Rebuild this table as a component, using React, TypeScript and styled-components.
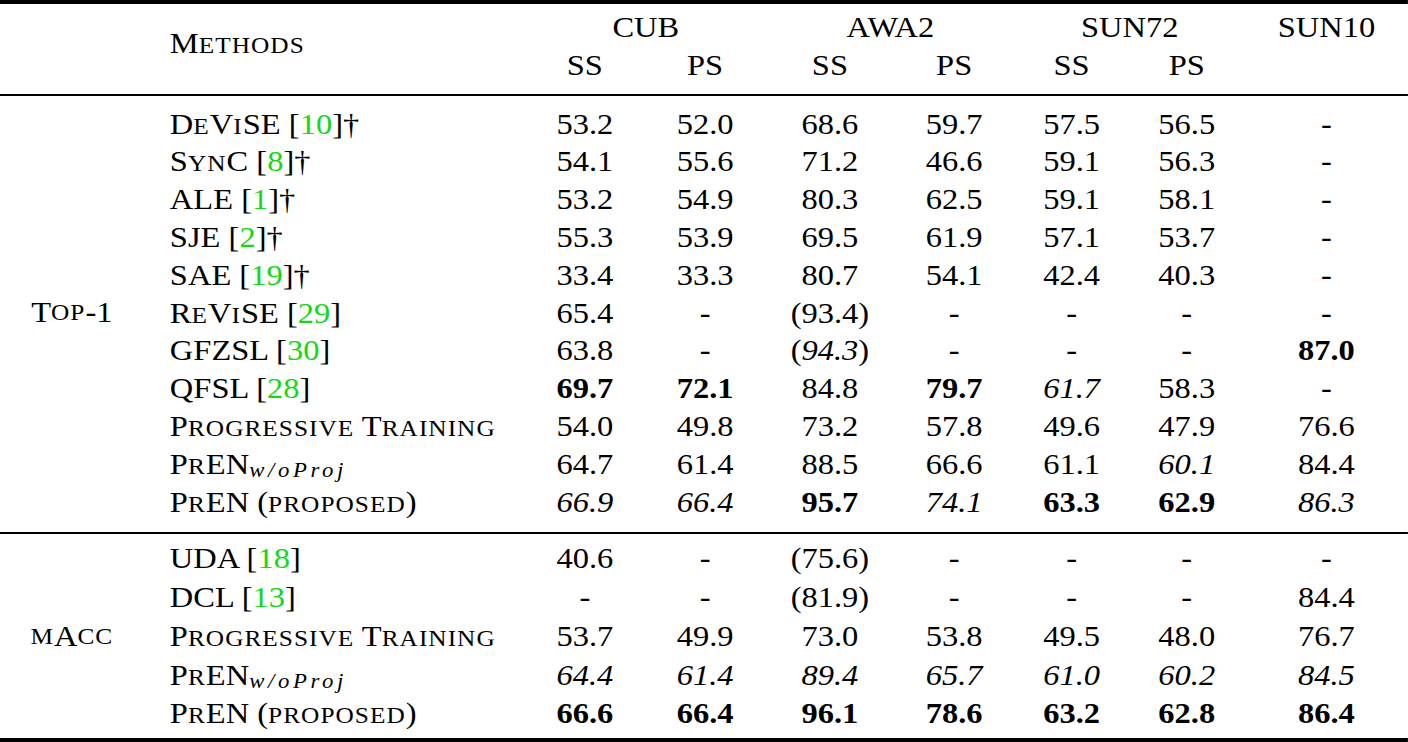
import React from "react";
import styled, { createGlobalStyle } from "styled-components";

const GlobalStyle = createGlobalStyle`
  html, body { margin: 0; padding: 0; background: #fff; }
  body { font-family: "Liberation Serif", "Times New Roman", serif; color: #000; }
`;

const DATA_COLS = "335px 104px 107px 112px 106px 100px 102px 143px";

const Page = styled.div`
  width: 1408px;
  height: 742px;
  overflow: hidden;
  background: #fff;
`;

const Table = styled.div`
  width: 1235px;
  transform: scaleX(1.14);
  transform-origin: 0 0;
  font-family: "Liberation Serif", "Times New Roman", serif;
  font-size: 28.5px;
  color: #000;
`;

const Rule = styled.div<{ $w: number }>`
  height: ${(p) => p.$w}px;
  background: #000;
`;

const Section = styled.div<{ $top: number; $bottom: number }>`
  display: flex;
  padding: ${(p) => p.$top}px 0 ${(p) => p.$bottom}px;
`;

const LabelCol = styled.div`
  width: 126px;
  flex: none;
  display: flex;
  align-items: center;
  justify-content: center;
  white-space: nowrap;
`;

const HeaderGrid = styled.div`
  flex: 1;
  display: grid;
  grid-template-columns: ${DATA_COLS};
  grid-template-rows: 38px 38px;
  line-height: 38px;
  text-align: center;
`;

const HeadMethods = styled.div`
  grid-column: 1;
  grid-row: 1 / 3;
  align-self: center;
  text-align: left;
  padding: 0 0 4px 23px;
`;

const Dataset = styled.div<{ $col: string; $row: number }>`
  grid-column: ${(p) => p.$col};
  grid-row: ${(p) => p.$row};
`;

const Rows = styled.div`
  flex: 1;
  display: flex;
  flex-direction: column;
`;

const Row = styled.div<{ $h: number }>`
  display: grid;
  grid-template-columns: ${DATA_COLS};
  height: ${(p) => p.$h}px;
  line-height: ${(p) => p.$h}px;
`;

const Method = styled.div`
  padding-left: 23px;
  white-space: nowrap;
`;

const Cell = styled.div`
  text-align: center;
  white-space: nowrap;
`;

const Val = styled.span<{ $s: "n" | "b" | "i" }>`
  font-weight: ${(p) => (p.$s === "b" ? 700 : 400)};
  font-style: ${(p) => (p.$s === "i" ? "italic" : "normal")};
`;

const Small = styled.span`
  font-size: 0.78em;
  letter-spacing: 0.04em;
`;

const Cite = styled.span`
  color: #14d814;
`;

const Sub = styled.span`
  font-size: 0.7em;
  font-style: italic;
  letter-spacing: 0.16em;
  vertical-align: -0.14em;
  line-height: 0;
`;

function SC({ t }: { t: string }) {
  const parts = t.match(/[a-z]+|[^a-z]+/g) || [];
  return (
    <>
      {parts.map((p, i) =>
        /^[a-z]/.test(p) ? <Small key={i}>{p.toUpperCase()}</Small> : <React.Fragment key={i}>{p}</React.Fragment>
      )}
    </>
  );
}

function Ref({ n, dagger }: { n: number; dagger?: boolean }) {
  return (
    <>
      {" "}[<Cite>{n}</Cite>]{dagger ? "†" : ""}
    </>
  );
}

function Num({ v }: { v: string }) {
  let s = v;
  let paren = false;
  if (s.startsWith("(")) {
    paren = true;
    s = s.slice(1, -1);
  }
  let st: "n" | "b" | "i" = "n";
  if (s.startsWith("*")) {
    st = "i";
    s = s.slice(1);
  } else if (s.startsWith("!")) {
    st = "b";
    s = s.slice(1);
  }
  const inner = <Val $s={st}>{s}</Val>;
  return <Cell>{paren ? <>({inner})</> : inner}</Cell>;
}

type RowData = { m: React.ReactNode; v: string[] };

const PrenWo = (
  <>
    <SC t="PrEN" />
    <Sub>w/oProj</Sub>
  </>
);
const PrenProp = <SC t="PrEN (proposed)" />;
const Prog = <SC t="Progressive Training" />;

const top1: RowData[] = [
  { m: <><SC t="DeViSE" /><Ref n={10} dagger /></>, v: ["53.2", "52.0", "68.6", "59.7", "57.5", "56.5", "-"] },
  { m: <><SC t="SynC" /><Ref n={8} dagger /></>, v: ["54.1", "55.6", "71.2", "46.6", "59.1", "56.3", "-"] },
  { m: <>ALE<Ref n={1} dagger /></>, v: ["53.2", "54.9", "80.3", "62.5", "59.1", "58.1", "-"] },
  { m: <>SJE<Ref n={2} dagger /></>, v: ["55.3", "53.9", "69.5", "61.9", "57.1", "53.7", "-"] },
  { m: <>SAE<Ref n={19} dagger /></>, v: ["33.4", "33.3", "80.7", "54.1", "42.4", "40.3", "-"] },
  { m: <><SC t="ReViSE" /><Ref n={29} /></>, v: ["65.4", "-", "(93.4)", "-", "-", "-", "-"] },
  { m: <>GFZSL<Ref n={30} /></>, v: ["63.8", "-", "(*94.3)", "-", "-", "-", "!87.0"] },
  { m: <>QFSL<Ref n={28} /></>, v: ["!69.7", "!72.1", "84.8", "!79.7", "*61.7", "58.3", "-"] },
  { m: Prog, v: ["54.0", "49.8", "73.2", "57.8", "49.6", "47.9", "76.6"] },
  { m: PrenWo, v: ["64.7", "61.4", "88.5", "66.6", "61.1", "*60.1", "84.4"] },
  { m: PrenProp, v: ["*66.9", "*66.4", "!95.7", "*74.1", "!63.3", "!62.9", "*86.3"] },
];

const macc: RowData[] = [
  { m: <>UDA<Ref n={18} /></>, v: ["40.6", "-", "(75.6)", "-", "-", "-", "-"] },
  { m: <>DCL<Ref n={13} /></>, v: ["-", "-", "(81.9)", "-", "-", "-", "84.4"] },
  { m: Prog, v: ["53.7", "49.9", "73.0", "53.8", "49.5", "48.0", "76.7"] },
  { m: PrenWo, v: ["*64.4", "*61.4", "*89.4", "*65.7", "*61.0", "*60.2", "*84.5"] },
  { m: PrenProp, v: ["!66.6", "!66.4", "!96.1", "!78.6", "!63.2", "!62.8", "!86.4"] },
];

function Group({
  label,
  rows,
  top,
  bottom,
  rowH,
}: {
  label: string;
  rows: RowData[];
  top: number;
  bottom: number;
  rowH: number;
}) {
  return (
    <Section $top={top} $bottom={bottom}>
      <LabelCol>
        <SC t={label} />
      </LabelCol>
      <Rows>
        {rows.map((r, i) => (
          <Row key={i} $h={rowH}>
            <Method>{r.m}</Method>
            {r.v.map((v, j) => (
              <Num key={j} v={v} />
            ))}
          </Row>
        ))}
      </Rows>
    </Section>
  );
}

export default function App() {
  return (
    <Page>
      <GlobalStyle />
      <Table>
        <Rule $w={4} />
        <Section $top={5} $bottom={9}>
          <LabelCol />
          <HeaderGrid>
            <HeadMethods>
              <SC t="Methods" />
            </HeadMethods>
            <Dataset $col="2 / 4" $row={1}>CUB</Dataset>
            <Dataset $col="4 / 6" $row={1}>AWA2</Dataset>
            <Dataset $col="6 / 8" $row={1}>SUN72</Dataset>
            <Dataset $col="8" $row={1}>SUN10</Dataset>
            <Dataset $col="2" $row={2}>SS</Dataset>
            <Dataset $col="3" $row={2}>PS</Dataset>
            <Dataset $col="4" $row={2}>SS</Dataset>
            <Dataset $col="5" $row={2}>PS</Dataset>
            <Dataset $col="6" $row={2}>SS</Dataset>
            <Dataset $col="7" $row={2}>PS</Dataset>
          </HeaderGrid>
        </Section>
        <Rule $w={2} />
        <Group label="Top-1" rows={top1} top={9.6} bottom={10.8} rowH={37.8} />
        <Rule $w={2} />
        <Group label="mAcc" rows={macc} top={6} bottom={3.5} rowH={38.8} />
        <Rule $w={5} />
      </Table>
    </Page>
  );
}
